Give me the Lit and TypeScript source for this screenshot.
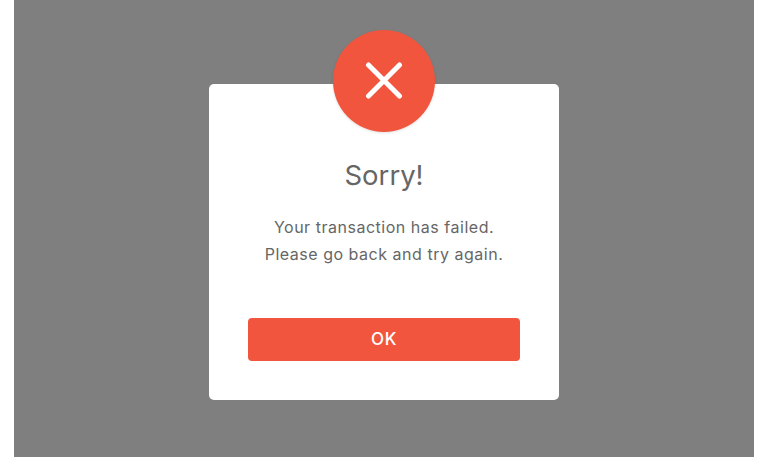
import { LitElement, html, css } from "lit";
import { customElement } from "lit/decorators.js";

@customElement("app-root")
export class AppRoot extends LitElement {
  static styles = css`
    :host {
      display: block;
      height: 457px;
      overflow: hidden;
      background: #fff;
      font-family: "Inter", "Noto Sans", sans-serif;
      padding: 0 14px;
      box-sizing: border-box;
    }
    .overlay {
      height: 100%;
      background: #7f7f7f;
      display: flex;
      flex-direction: column;
      align-items: center;
      padding-top: 30px;
      box-sizing: border-box;
    }
    .badge {
      width: 102px;
      height: 102px;
      border-radius: 50%;
      background: #f2553d;
      box-shadow: 0 1px 3px rgba(0, 0, 0, 0.12);
      display: flex;
      align-items: center;
      justify-content: center;
      margin-bottom: -48px;
      position: relative;
      z-index: 1;
    }
    .modal {
      width: 350px;
      height: 316px;
      box-sizing: border-box;
      background: #fff;
      border-radius: 5px;
      padding: 72px 39px 39px;
      display: flex;
      flex-direction: column;
      align-items: center;
      color: #666;
    }
    h1 {
      margin: 0;
      font-weight: 400;
      font-size: 27.5px;
      line-height: 38px;
    }
    p {
      margin: 20px 0 0;
      font-size: 16px;
      line-height: 26.5px;
      text-align: center;
      letter-spacing: 0.52px;
    }
    button {
      margin-top: auto;
      width: 272px;
      height: 43px;
      padding: 0 0 1px;
      border: 0;
      border-radius: 4px;
      background: #f2553d;
      color: #fff;
      font: inherit;
      font-size: 17px;
      font-weight: 500;
      letter-spacing: 0.6px;
    }
  `;

  render() {
    return html`
      <div class="overlay">
        <div class="badge">
          <svg width="38" height="38" viewBox="0 0 38 38">
            <path d="M3.5 3L34.5 34M34.5 3L3.5 34" stroke="#fff" stroke-width="5" stroke-linecap="round" fill="none" />
          </svg>
        </div>
        <div class="modal">
          <h1>Sorry!</h1>
          <p>Your transaction has failed.<br />Please go back and try again.</p>
          <button>OK</button>
        </div>
      </div>
    `;
  }
}
